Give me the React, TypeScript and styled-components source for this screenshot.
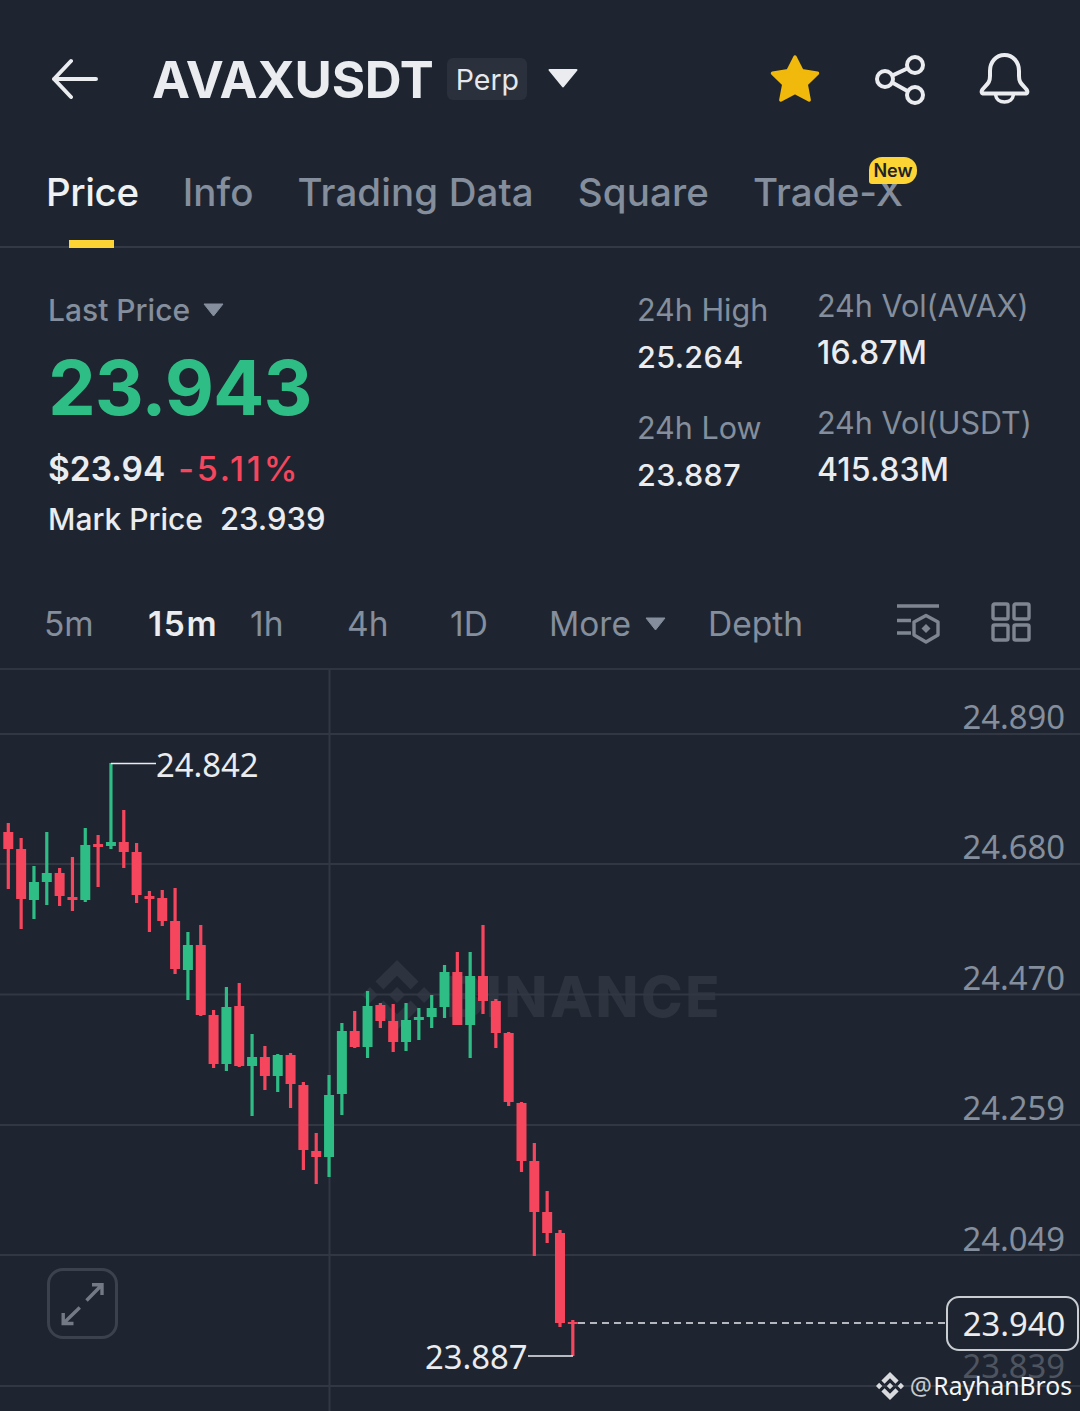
import React from "react";
import styled, { createGlobalStyle } from "styled-components";

const BG = "#1e2530";
const UI = `Inter, "Noto Sans", sans-serif`;
const NUM = `"Noto Sans", "Open Sans", sans-serif`;

const Global = createGlobalStyle`
  html, body { margin: 0; padding: 0; background: ${BG}; }
  #root { width: 1080px; height: 1411px; overflow: hidden; }
  * { box-sizing: border-box; }
`;

const Page = styled.div`
  width: 1080px; height: 1411px; display: flex; flex-direction: column;
  background: ${BG}; color: #eaecef; font-family: ${UI}; overflow: hidden;
`;

const Header = styled.header`
  height: 158px; flex: none; display: flex; align-items: center; padding: 0 50px 0 52px;
`;
const BackIcon = styled.svg`
  width: 46px; height: 42px; flex: none; margin-right: 55px;
`;
const Title = styled.h1`
  margin: 0 0 0 -1px; font-size: 51px; font-weight: 700; letter-spacing: -0.3px; color: #eaecef; line-height: 1;
`;
const PerpBadge = styled.span`
  margin-left: 14px; width: 80px; height: 42px; display: flex; align-items: center; justify-content: center;
  background: #2b313c; border-radius: 6px; font-size: 28.5px; font-weight: 400; color: #e6e8ec;
`;
const TitleCaret = styled.svg`
  margin-left: 21px; width: 30px; height: 20px; flex: none; margin-bottom: 2px;
`;
const HeaderActions = styled.div`
  margin-left: auto; display: flex; align-items: center; gap: 55px;
`;
const HeaderIcon = styled.svg`
  width: 50px; height: 50px; flex: none; display: block; overflow: visible;
`;

const Tabs = styled.nav`
  height: 90px; flex: none; display: flex; gap: 44px; padding: 0 0 0 46px;
  border-bottom: 2px solid #343a45; align-items: flex-start;
`;
const Tab = styled.div<{ $active?: boolean }>`
  position: relative; height: 90px; padding-top: 9px; font-size: 38.5px; line-height: 50px;
  letter-spacing: ${p => (p.$active ? "-0.4px" : "0.1px")};
  font-weight: 500; color: ${p => (p.$active ? "#f0f1f3" : "#848e9c")};
`;
const TabMark = styled.span`
  position: absolute; left: 23px; bottom: 0; width: 45px; height: 8px; background: #fcd535;
`;
const NewBadge = styled.span`
  position: absolute; right: -14px; top: -1px; width: 48px; height: 27px; border-radius: 13px 13px 13px 3px;
  background: #fcd535; color: #1e2329; font-size: 18px; font-weight: 600; letter-spacing: 0; display: flex; align-items: center; justify-content: center;
`;

const Stats = styled.section`
  height: 332px; flex: none; display: flex; padding: 40px 0 0 48px;
`;
const MainStat = styled.div`
  width: 589px; flex: none; display: flex; flex-direction: column;
`;
const LastPrice = styled.div`
  display: flex; align-items: center; gap: 13px; font-size: 30px; line-height: 44px; font-weight: 500; color: #848e9c;
`;
const SmallCaret = styled.svg`
  width: 21px; height: 14px; flex: none; margin-bottom: 1px;
`;
const BigPrice = styled.div`
  margin-top: 13px; font-size: 76px; line-height: 84px; font-weight: 700; color: #2ebd85; letter-spacing: -1px;
`;
const FiatRow = styled.div`
  margin-top: 18px; display: flex; gap: 13px; line-height: 44px; align-items: baseline;
`;
const Fiat = styled.span` font-size: 33.5px; font-weight: 600; color: #eaecef; `;
const Change = styled.span` font-size: 34px; letter-spacing: 2.8px; font-weight: 500; color: #f6465d; `;
const MarkRow = styled.div`
  margin-top: 6px; display: flex; gap: 17px; line-height: 44px; font-weight: 500; color: #eaecef; align-items: baseline;
`;
const MarkLabel = styled.span` font-size: 30px; `;
const MarkValue = styled.span` font-size: 31px; `;
const StatCol = styled.div<{ $w: number; $shift: number }>`
  width: ${p => p.$w}px; flex: none; margin-top: ${p => p.$shift}px; display: flex; flex-direction: column;
`;
const StatItem = styled.div<{ $h: number }>`
  height: ${p => p.$h}px; display: flex; flex-direction: column;
`;
const StatLabel = styled.span`
  font-size: 30.5px; line-height: 44px; font-weight: 400; color: #848e9c; white-space: nowrap;
`;
const StatValue = styled.span<{ $big?: boolean; $gap: number }>`
  font-size: ${p => (p.$big ? 32 : 30.5)}px; letter-spacing: ${p => (p.$big ? 0.2 : 0.4)}px;
  line-height: 46px; margin-top: ${p => p.$gap}px; font-weight: 500; color: #eaecef; white-space: nowrap;
`;

const Frames = styled.div`
  height: 90px; flex: none; display: grid; align-items: center; padding: 0 0 0 44px;
  grid-template-columns: 104px 102px 97px 103px 99px 159px 189px 94px 44px;
  border-bottom: 2px solid #2f3541; font-size: 33.5px; font-weight: 400; color: #848e9c;
`;
const Frame = styled.span<{ $active?: boolean }>`
  font-weight: ${p => (p.$active ? 600 : 400)};
  letter-spacing: ${p => (p.$active ? "1.6px" : "0")};
  color: ${p => (p.$active ? "#eaecef" : "#848e9c")};
  display: flex; align-items: center; gap: 14px;
`;
const FrameIcon = styled.svg`
  width: 44px; height: 44px; flex: none; display: block;
`;

const Chart = styled.main`
  position: relative; flex: 1; overflow: hidden;
`;
const ChartSvg = styled.svg`
  position: absolute; inset: 0; width: 1080px; height: 741px; display: block;
`;
const Watermark = styled.div`
  position: absolute; left: 362px; top: 290px; display: flex; align-items: center; gap: 14px;
  font-size: 56px; font-weight: 800; letter-spacing: 2.6px; color: #2e343f; line-height: 70px;
`;
const WatermarkText = styled.span` position: relative; top: 2px; `;
const AxisLabel = styled.span<{ $y: number; $dim?: boolean }>`
  position: absolute; right: 15px; top: ${p => p.$y - 670 - 22}px; font-family: ${NUM}; font-size: 32.8px; line-height: 44px;
  color: ${p => (p.$dim ? "#4f5560" : "#848e9c")};
`;
const ExtremeLabel = styled.span<{ $x: number; $y: number }>`
  position: absolute; left: ${p => p.$x}px; top: ${p => p.$y - 670 - 22}px; font-family: ${NUM}; font-size: 32.8px; line-height: 44px; color: #eaecef;
`;
const CurrentPrice = styled.div`
  position: absolute; left: 946px; top: 626px; width: 133px; height: 55px; border: 2px solid #c9ccd1; border-radius: 13px;
  background: ${BG}; display: flex; align-items: center; justify-content: center; padding-left: 3px;
  font-family: ${NUM}; font-size: 32.8px; color: #eaecef;
`;
const ExpandButton = styled.div`
  position: absolute; left: 47px; top: 598px; width: 71px; height: 71px; border: 3px solid #3b424e; border-radius: 16px;
  display: flex; align-items: center; justify-content: center;
`;
const ExpandIcon = styled.svg` width: 50px; height: 50px; display: block; `;
const Signature = styled.div`
  position: absolute; right: 8px; bottom: 9px; display: flex; align-items: center; gap: 6px;
  font-family: ${NUM}; font-size: 24.7px; line-height: 32px; color: #f4f5f6;
`;
const At = styled.span` color: #c6c9ce; margin-right: -5px; `;
const SigLogo = styled.svg` width: 28px; height: 28px; display: block; fill: #d8dade; `;
const WatermarkLogo = styled.svg` width: 70px; height: 70px; display: block; fill: #2e343f; `;

const LOGO = "M38.73 53.2l24.59-24.58 24.6 24.6 14.3-14.31L63.32 0 24.43 38.9zM0 63.31l14.3-14.31 14.31 14.31-14.31 14.3zM38.73 73.41l24.59 24.59 24.6-24.6 14.31 14.29-38.9 38.91-38.91-38.88-.02-.02zM98 63.31l14.3-14.3 14.31 14.3-14.31 14.31zM77.83 63.3L63.32 48.78 52.59 59.51l-1.24 1.23-2.54 2.54 14.51 14.5 14.51-14.47z";

type C = [0 | 1, number, number, number, number];
// 1 = green; wick top, body top, body bottom, wick bottom
const candles: C[] = [
  [0, 823, 832, 849, 889], [0, 838, 849, 899, 929], [1, 866, 882, 900, 919], [1, 832, 873, 882, 905],
  [0, 868, 873, 896, 906], [0, 857, 897, 900, 911], [1, 828, 845, 900, 902], [0, 835, 844, 847, 887],
  [1, 763, 842, 846, 849], [0, 810, 842, 852, 868], [0, 843, 852, 895, 903], [0, 891, 896, 899, 932],
  [0, 890, 898, 921, 926], [0, 888, 921, 969, 974], [1, 932, 945, 970, 1000], [0, 925, 945, 1015, 1016],
  [0, 1010, 1015, 1064, 1068], [1, 987, 1007, 1064, 1071], [0, 983, 1006, 1066, 1067], [1, 1034, 1057, 1066, 1116],
  [0, 1046, 1057, 1076, 1090], [1, 1054, 1055, 1076, 1092], [0, 1053, 1055, 1084, 1108], [0, 1082, 1085, 1150, 1170],
  [0, 1133, 1151, 1157, 1184], [1, 1075, 1095, 1157, 1177], [1, 1023, 1031, 1094, 1115], [0, 1011, 1031, 1047, 1048],
  [1, 991, 1006, 1047, 1058], [0, 1003, 1005, 1021, 1028], [0, 1004, 1021, 1042, 1052], [1, 1003, 1020, 1042, 1051],
  [1, 1008, 1017, 1020, 1040], [1, 995, 1008, 1017, 1028], [1, 965, 972, 1007, 1018], [0, 952, 972, 1025, 1025],
  [1, 952, 976, 1025, 1058], [0, 925, 976, 1001, 1014], [0, 999, 1001, 1033, 1048], [0, 1032, 1033, 1102, 1106],
  [0, 1102, 1103, 1161, 1172], [0, 1143, 1161, 1212, 1256], [0, 1191, 1212, 1233, 1243], [0, 1230, 1233, 1323, 1327],
  [0, 1320, 1322, 1324, 1356],
];
const GRID = [734, 864, 994.5, 1125, 1255, 1386];
const AXIS: [string, number][] = [["24.890", 717], ["24.680", 847], ["24.470", 978], ["24.259", 1108], ["24.049", 1239]];

function Candles() {
  return (
    <ChartSvg viewBox="0 670 1080 741">
      {GRID.map(y => <line key={y} x1="0" x2="1080" y1={y} y2={y} stroke="#323843" strokeWidth="2" />)}
      <line x1="329.5" x2="329.5" y1="670" y2="1411" stroke="#323843" strokeWidth="2" />
      {candles.map(([g, wt, bt, bb, wb], i) => {
        const x = 8.3 + i * 12.83;
        const col = g ? "#2ebd85" : "#f6465d";
        return (
          <g key={i} fill={col}>
            <rect x={x - 1.6} y={wt} width="3.2" height={wb - wt} />
            <rect x={x - 5} y={bt} width="10" height={bb - bt} />
          </g>
        );
      })}
      <path d="M111 763.5H156M528 1356H573" stroke="#eaecef" strokeWidth="1.6" fill="none" />
      <line x1="578" x2="946" y1="1323" y2="1323" stroke="#e6e8ec" strokeWidth="1.6" strokeDasharray="7 5" />
    </ChartSvg>
  );
}

export default function App() {
  return (
    <Page>
      <Global />
      <Header>
        <BackIcon viewBox="0 0 46 42" fill="none" stroke="#eaecef" strokeWidth="4" strokeLinecap="round" strokeLinejoin="round">
          <path d="M19 3L2 21L19 39M2 21H44" />
        </BackIcon>
        <Title>AVAXUSDT</Title>
        <PerpBadge>Perp</PerpBadge>
        <TitleCaret viewBox="0 0 30 20"><path d="M1.5 1H28.5a1 1 0 0 1 .8 1.6L16 18.8a1.3 1.3 0 0 1-2 0L.7 2.6A1 1 0 0 1 1.5 1z" fill="#eaecef" /></TitleCaret>
        <HeaderActions>
          <HeaderIcon viewBox="0 0 50 50">
            <path d="M25 3L32 16.8L47.5 19.2L36.2 30.4L39.2 46L25 38.6L10.8 46L13.8 30.4L2.5 19.2L18 16.8Z" fill="#f0b90b" stroke="#f0b90b" strokeWidth="3.4" strokeLinejoin="round" />
          </HeaderIcon>
          <HeaderIcon viewBox="0 0 50 50" fill="none" stroke="#eaecef" strokeWidth="4">
            <circle cx="40" cy="11" r="8" /><circle cx="10" cy="25" r="8" /><circle cx="40" cy="41" r="8" />
            <path d="M17.2 21.6L32.8 14.2M17.2 28.6L32.8 37.2" />
          </HeaderIcon>
          <HeaderIcon viewBox="0 0 50 50" fill="none" stroke="#eaecef" strokeWidth="4" strokeLinejoin="round">
            <path d="M4 39.5C1.5 39.5 1 37.5 2.5 35.5C7 30 10 29 10 22V17C10 8 16 1 24.5 1S39 8 39 17V22C39 29 42 30 46.5 35.5C48 37.5 47.5 39.5 45 39.5Z" />
            <path d="M15.5 40C16 45.5 20 48 24.5 48S33 45.5 33.5 40" strokeWidth="3.4" />
          </HeaderIcon>
        </HeaderActions>
      </Header>

      <Tabs>
        <Tab $active>Price<TabMark /></Tab>
        <Tab>Info</Tab>
        <Tab>Trading Data</Tab>
        <Tab>Square</Tab>
        <Tab>Trade-X<NewBadge>New</NewBadge></Tab>
      </Tabs>

      <Stats>
        <MainStat>
          <LastPrice>Last Price<SmallCaret viewBox="0 0 21 14"><path d="M1 1H20L10.5 13Z" fill="#848e9c" stroke="#848e9c" strokeLinejoin="round" /></SmallCaret></LastPrice>
          <BigPrice>23.943</BigPrice>
          <FiatRow><Fiat>$23.94</Fiat><Change>-5.11%</Change></FiatRow>
          <MarkRow><MarkLabel>Mark Price</MarkLabel><MarkValue>23.939</MarkValue></MarkRow>
        </MainStat>
        <StatCol $w={180} $shift={0}>
          <StatItem $h={118}><StatLabel>24h High</StatLabel><StatValue $gap={2}>25.264</StatValue></StatItem>
          <StatItem $h={118}><StatLabel>24h Low</StatLabel><StatValue $gap={2}>23.887</StatValue></StatItem>
        </StatCol>
        <StatCol $w={240} $shift={-4}>
          <StatItem $h={117}><StatLabel>24h Vol(AVAX)</StatLabel><StatValue $big $gap={2}>16.87M</StatValue></StatItem>
          <StatItem $h={117}><StatLabel>24h Vol(USDT)</StatLabel><StatValue $big $gap={2}>415.83M</StatValue></StatItem>
        </StatCol>
      </Stats>

      <Frames>
        <Frame>5m</Frame>
        <Frame $active>15m</Frame>
        <Frame>1h</Frame>
        <Frame>4h</Frame>
        <Frame>1D</Frame>
        <Frame>More<SmallCaret viewBox="0 0 21 14"><path d="M1 1H20L10.5 13Z" fill="#848e9c" stroke="#848e9c" strokeLinejoin="round" /></SmallCaret></Frame>
        <Frame>Depth</Frame>
        <FrameIcon viewBox="0 0 44 44" fill="none" stroke="#7f8691" strokeWidth="3.4">
          <path d="M0 4H42M0 18.5H14M0 31H14" />
          <path d="M29 13.5L41 20V33L29 40L17 33V20Z" strokeLinejoin="round" />
          <path d="M29 22L33.5 26.5L29 31L24.5 26.5Z" fill="#7f8691" stroke="none" />
        </FrameIcon>
        <FrameIcon viewBox="0 0 44 44" fill="none" stroke="#7f8691" strokeWidth="3.4">
          <rect x="2" y="2" width="15" height="15" rx="1.5" />
          <rect x="23" y="2" width="15" height="15" rx="1.5" />
          <rect x="2" y="23" width="15" height="15" rx="1.5" />
          <rect x="23" y="23" width="15" height="15" rx="1.5" />
        </FrameIcon>
      </Frames>

      <Chart>
        <Watermark>
          <WatermarkLogo viewBox="0 0 126.61 126.61"><path d={LOGO} /></WatermarkLogo>
          <WatermarkText>BINANCE</WatermarkText>
        </Watermark>
        <Candles />
        {AXIS.map(([t, y]) => <AxisLabel key={t} $y={y}>{t}</AxisLabel>)}
        <AxisLabel $y={1366} $dim>23.839</AxisLabel>
        <ExtremeLabel $x={156} $y={765}>24.842</ExtremeLabel>
        <ExtremeLabel $x={425} $y={1357}>23.887</ExtremeLabel>
        <CurrentPrice>23.940</CurrentPrice>
        <ExpandButton>
          <ExpandIcon viewBox="0 0 50 50" fill="none" stroke="#737a86" strokeWidth="3.4">
            <path d="M28.5 21.5L44 5.8M34 5.8H44V16M21.8 28.5L5.2 44.5M5.2 34V44.5H15.5" />
          </ExpandIcon>
        </ExpandButton>
        <Signature>
          <SigLogo viewBox="0 0 126.61 126.61"><path d={LOGO} /></SigLogo>
          <span><At>@ </At>RayhanBros</span>
        </Signature>
      </Chart>
    </Page>
  );
}
